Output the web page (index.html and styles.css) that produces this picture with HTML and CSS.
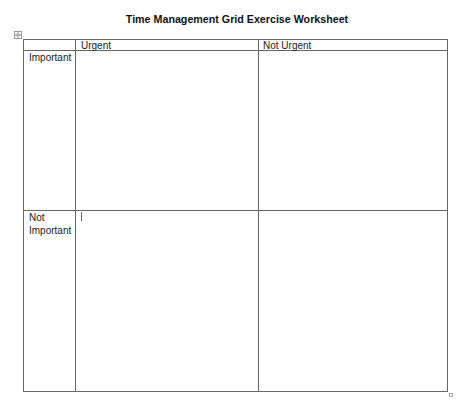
FILE: index.html
```html
<!DOCTYPE html>
<html>
<head>
<meta charset="utf-8">
<link rel="stylesheet" href="styles.css">
</head>
<body>
<div class="page">
  <h1 class="title">Time Management Grid Exercise Worksheet</h1>
  <div class="table-wrap">
    <span class="move-handle"><svg width="8" height="8" viewBox="0 0 8 8"><rect x="0.5" y="0.5" width="7" height="7" fill="#fff" stroke="#999"/><path d="M4 1.5v5M1.5 4h5M4 1.5l-1 1M4 1.5l1 1M4 6.5l-1-1M4 6.5l1-1M1.5 4l1-1M1.5 4l1 1M6.5 4l-1-1M6.5 4l-1 1" stroke="#777" stroke-width="0.7" fill="none"/></svg></span>
    <div class="grid">
      <div class="cell"></div>
      <div class="cell">Urgent</div>
      <div class="cell">Not Urgent</div>
      <div class="cell">Important</div>
      <div class="cell"></div>
      <div class="cell"></div>
      <div class="cell">Not<br>Important</div>
      <div class="cell"><span class="caret"></span></div>
      <div class="cell"></div>
    </div>
    <span class="resize-handle"></span>
  </div>
</div>
</body>
</html>
```
FILE: styles.css
```css
html, body {
  margin: 0;
  padding: 0;
  background: #fff;
}
.page {
  width: 474px;
  height: 408px;
  position: relative;
  font-family: "Liberation Sans", Arial, sans-serif;
  color: #111;
}
.title {
  margin: 0;
  padding-top: 13px;
  height: 26px;
  box-sizing: border-box;
  text-align: center;
  font-size: 10.7px;
  line-height: 12px;
  font-weight: bold;
  color: #111;
}
.table-wrap {
  position: relative;
  margin-top: 13px;
  margin-left: 23px;
  width: 425px;
}
.grid {
  display: grid;
  grid-template-columns: 51px 182px 188px;
  grid-template-rows: 10px 159px 180px;
  gap: 1px;
  padding: 1px;
  background: #666;
}
.cell {
  background: #fff;
  font-size: 10px;
  line-height: 12.5px;
  padding: 0 5px;
  color: #1a1a1a;
  overflow: visible;
  white-space: nowrap;
}
.grid .cell:nth-child(2),
.grid .cell:nth-child(3) {
  line-height: 10px;
  padding-top: 1px;
}
.grid .cell:nth-child(3) {
  padding-left: 4px;
}
.grid .cell:nth-child(4),
.grid .cell:nth-child(7) {
  padding-top: 1px;
}
.caret {
  display: block;
  width: 1px;
  height: 9px;
  margin-top: 1px;
  background: #666;
}
.move-handle {
  position: absolute;
  left: -9px;
  top: -8px;
  width: 8px;
  height: 8px;
  line-height: 0;
}
.resize-handle {
  position: absolute;
  right: -5px;
  bottom: -5px;
  width: 4px;
  height: 4px;
  border: 1px solid #aaa;
  background: #fff;
  box-sizing: border-box;
}
```
